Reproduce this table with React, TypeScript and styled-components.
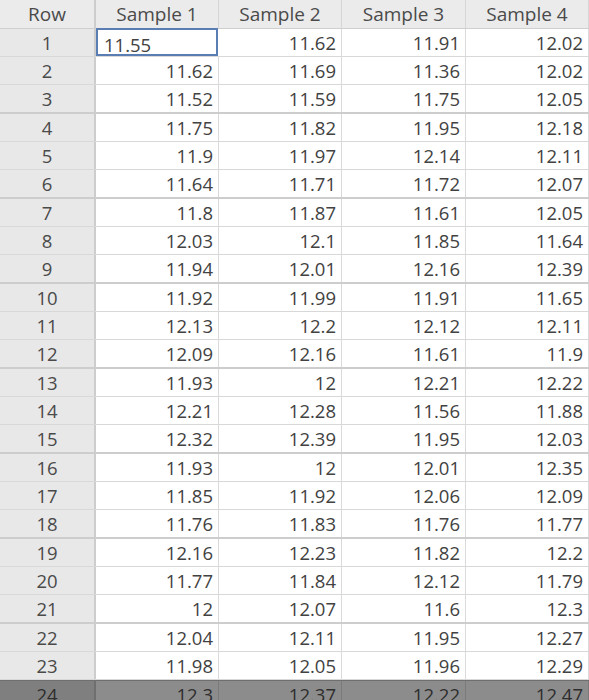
import React from "react";
import styled, { createGlobalStyle, css } from "styled-components";

const GlobalStyle = createGlobalStyle`
  html, body {
    margin: 0;
    padding: 0;
    background: #ffffff;
    overflow: hidden;
  }
  body {
    font-family: "Open Sans", "Noto Sans", "Liberation Sans", sans-serif;
  }
`;

const COLS = "96px 123px 123px 124px 123px";

const Sheet = styled.div`
  width: 589px;
  height: 700px;
  overflow: hidden;
  background: #ffffff;
  font-size: 18.5px;
  color: #424242;
`;

const HeaderRow = styled.div`
  display: grid;
  grid-template-columns: ${COLS};
  height: 29px;
  background: #ebebeb;
  border-bottom: 1px solid #cfcfcf;
  box-sizing: border-box;
`;

const HeaderCell = styled.div<{ $first?: boolean }>`
  box-sizing: border-box;
  font-size: 19px;
  line-height: 28px;
  text-align: center;
  color: #4a4a4a;
  border-right: ${(p) => (p.$first ? "2px solid #cdcdcd" : "1px solid #d6d6d6")};
  white-space: nowrap;
  overflow: hidden;
`;

const DataRow = styled.div<{ $thick?: boolean; $dark?: boolean }>`
  display: grid;
  grid-template-columns: ${COLS};
  box-sizing: border-box;
  height: ${(p) => (p.$thick ? 29 : 28)}px;
  border-bottom: ${(p) => (p.$thick ? "2px solid #cdcdcd" : "1px solid #d8d8d8")};
  ${(p) =>
    p.$dark &&
    css`
      border-top: 1px solid #6f6f6f;
      background: #8c8c8c;
      color: #2e2e2e;
    `}
`;

const RowHead = styled.div<{ $dark?: boolean }>`
  box-sizing: border-box;
  line-height: 27px;
  text-align: center;
  background: ${(p) => (p.$dark ? "#7f7f7f" : "#e8e8e8")};
  border-right: 2px solid ${(p) => (p.$dark ? "#6f6f6f" : "#cdcdcd")};
  color: ${(p) => (p.$dark ? "#2e2e2e" : "#4a4a4a")};
`;

const Cell = styled.div<{ $dark?: boolean; $editing?: boolean }>`
  box-sizing: border-box;
  line-height: 27px;
  text-align: right;
  padding-right: 5px;
  border-right: 1px solid ${(p) => (p.$dark ? "#7a7a7a" : "#dadada")};
  white-space: nowrap;
  overflow: hidden;
  ${(p) =>
    p.$editing &&
    css`
      text-align: left;
      padding: 3px 0 0 6px;
      line-height: 24px;
      border: 2px solid #5a7db3;
      margin-right: 1px;
      height: 28px;
      margin-top: -1px;
      background: #ffffff;
    `}
`;

const data: string[][] = [
  ["11.55", "11.62", "11.91", "12.02"],
  ["11.62", "11.69", "11.36", "12.02"],
  ["11.52", "11.59", "11.75", "12.05"],
  ["11.75", "11.82", "11.95", "12.18"],
  ["11.9", "11.97", "12.14", "12.11"],
  ["11.64", "11.71", "11.72", "12.07"],
  ["11.8", "11.87", "11.61", "12.05"],
  ["12.03", "12.1", "11.85", "11.64"],
  ["11.94", "12.01", "12.16", "12.39"],
  ["11.92", "11.99", "11.91", "11.65"],
  ["12.13", "12.2", "12.12", "12.11"],
  ["12.09", "12.16", "11.61", "11.9"],
  ["11.93", "12", "12.21", "12.22"],
  ["12.21", "12.28", "11.56", "11.88"],
  ["12.32", "12.39", "11.95", "12.03"],
  ["11.93", "12", "12.01", "12.35"],
  ["11.85", "11.92", "12.06", "12.09"],
  ["11.76", "11.83", "11.76", "11.77"],
  ["12.16", "12.23", "11.82", "12.2"],
  ["11.77", "11.84", "12.12", "11.79"],
  ["12", "12.07", "11.6", "12.3"],
  ["12.04", "12.11", "11.95", "12.27"],
  ["11.98", "12.05", "11.96", "12.29"],
  ["12.3", "12.37", "12.22", "12.47"],
];

const headers = ["Row", "Sample 1", "Sample 2", "Sample 3", "Sample 4"];

export default function App() {
  return (
    <>
      <GlobalStyle />
      <Sheet>
        <HeaderRow>
          {headers.map((h, i) => (
            <HeaderCell key={h} $first={i === 0}>
              {h}
            </HeaderCell>
          ))}
        </HeaderRow>
        {data.map((row, r) => {
          const dark = r === 23;
          return (
            <DataRow key={r} $thick={r % 3 === 2} $dark={dark}>
              <RowHead $dark={dark}>{r + 1}</RowHead>
              {row.map((v, c) => (
                <Cell key={c} $dark={dark} $editing={r === 0 && c === 0}>
                  {v}
                </Cell>
              ))}
            </DataRow>
          );
        })}
      </Sheet>
    </>
  );
}
